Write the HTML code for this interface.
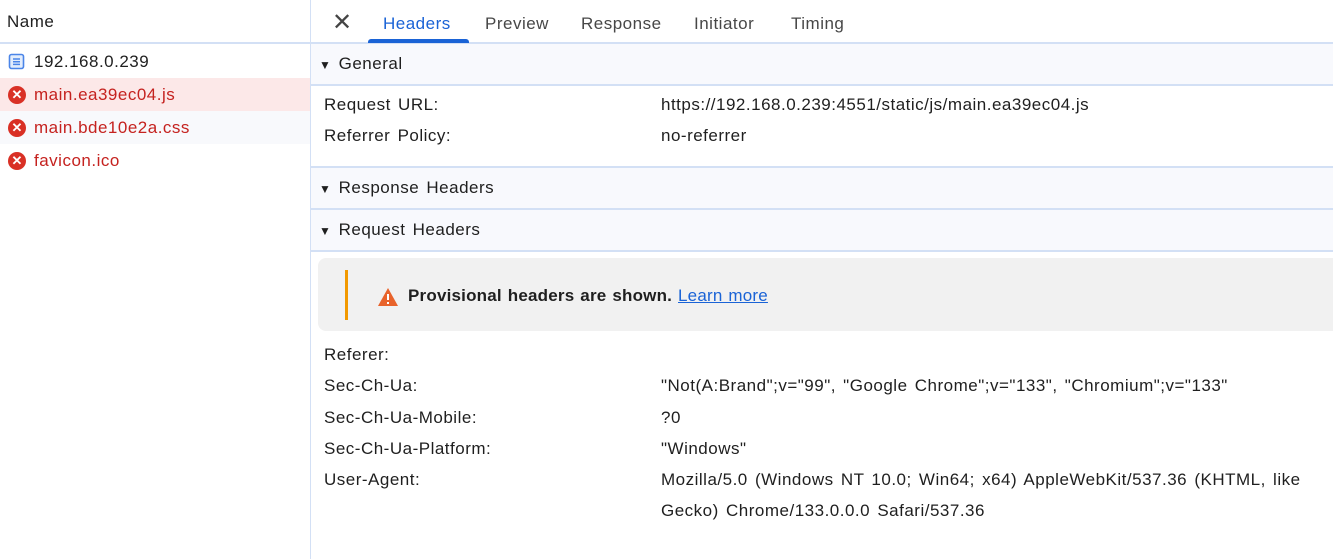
<!DOCTYPE html><html><head><style>
body{margin:0;width:1333px;height:559px;overflow:hidden;background:#fff;font-family:"Liberation Sans",sans-serif;font-size:17px;color:#1f1f1f;position:relative;letter-spacing:0.5px;word-spacing:2px}
.a{position:absolute;white-space:nowrap}
.l{position:absolute;left:0;top:0;width:310px;height:559px;border-right:1px solid #d3e0f5}
.row{position:absolute;left:0;width:310px;height:33px;line-height:33px}
.row span{position:absolute;left:34px}
.err{color:#c5221f}
.ic{position:absolute;left:8px;top:8px;width:18px;height:18px;border-radius:50%;background:#d93025;color:#fff;font-size:13px;line-height:18px;text-align:center;font-weight:bold;letter-spacing:0}
.sec{position:absolute;left:311px;right:0;height:40px;line-height:40px;background:#f8f9fd;border-bottom:2px solid #d3e0f5;padding-left:8px}
.tab{position:absolute;top:0;line-height:48px;color:#474747}
</style></head><body>
<div class="l">
<div class="a" style="left:7px;top:12px">Name</div>
<div style="position:absolute;left:0;top:42px;width:310px;height:2px;background:#d3e0f5"></div>
<div class="row" style="top:45px"><svg style="position:absolute;left:8px;top:8px" width="17" height="17" viewBox="0 0 17 17"><rect x="1.5" y="1.5" width="14" height="14" rx="2" fill="#e3edfc" stroke="#4b85e8" stroke-width="1.6"/><path d="M5 6h7M5 8.7h7M5 11.4h7" stroke="#4b85e8" stroke-width="1.5"/></svg><span>192.168.0.239</span></div>
<div class="row err" style="top:78px;background:#fce8e8"><div class="ic">✕</div><span>main.ea39ec04.js</span></div>
<div class="row err" style="top:111px;background:#f8f9fc"><div class="ic">✕</div><span>main.bde10e2a.css</span></div>
<div class="row err" style="top:144px"><div class="ic">✕</div><span>favicon.ico</span></div>
</div>
<div style="position:absolute;left:311px;right:0;top:42px;height:2px;background:#d3e0f5"></div>
<div class="a" style="left:332px;top:8px;font-size:24px;color:#444">✕</div>
<div class="tab" style="left:383px;color:#1a63d6">Headers</div>
<div style="position:absolute;left:368px;top:39px;width:101px;height:4px;background:#1a63d6;border-radius:3px 3px 0 0"></div>
<div class="tab" style="left:485px">Preview</div>
<div class="tab" style="left:581px">Response</div>
<div class="tab" style="left:694px">Initiator</div>
<div class="tab" style="left:791px">Timing</div>
<div class="sec" style="top:44px"><span style="font-size:12px">▼</span> General</div>
<div class="a" style="left:324px;top:95px">Request URL:</div><div class="a" style="left:661px;top:95px">https://192.168.0.239:4551/static/js/main.ea39ec04.js</div>
<div class="a" style="left:324px;top:126px">Referrer Policy:</div><div class="a" style="left:661px;top:126px">no-referrer</div>
<div style="position:absolute;left:311px;right:0;top:166px;height:2px;background:#d3e0f5"></div>
<div class="sec" style="top:168px"><span style="font-size:12px">▼</span> Response Headers</div>
<div class="sec" style="top:210px"><span style="font-size:12px">▼</span> Request Headers</div>
<div style="position:absolute;left:318px;right:0;top:258px;height:73px;background:#f1f1f1;border-radius:8px 0 0 8px"></div>
<div style="position:absolute;left:345px;top:270px;width:3px;height:50px;background:#f29900"></div>
<svg class="a" style="left:377px;top:287px" width="22" height="20" viewBox="0 0 22 20"><path d="M11 1L21 19H1Z" fill="#e8632b"/><path d="M11 7v6M11 15v2" stroke="#fff" stroke-width="2"/></svg>
<div class="a" style="left:408px;top:286px;font-weight:bold;letter-spacing:0.2px;word-spacing:1px">Provisional headers are shown. <span style="font-weight:normal;color:#1a63d6;text-decoration:underline">Learn more</span></div>
<div class="a" style="left:324px;top:345px">Referer:</div>
<div class="a" style="left:324px;top:376px">Sec-Ch-Ua:</div><div class="a" style="left:661px;top:376px">"Not(A:Brand";v="99", "Google Chrome";v="133", "Chromium";v="133"</div>
<div class="a" style="left:324px;top:408px">Sec-Ch-Ua-Mobile:</div><div class="a" style="left:661px;top:408px">?0</div>
<div class="a" style="left:324px;top:439px">Sec-Ch-Ua-Platform:</div><div class="a" style="left:661px;top:439px">"Windows"</div>
<div class="a" style="left:324px;top:470px">User-Agent:</div><div class="a" style="left:661px;top:470px">Mozilla/5.0 (Windows NT 10.0; Win64; x64) AppleWebKit/537.36 (KHTML, like</div>
<div class="a" style="left:661px;top:501px">Gecko) Chrome/133.0.0.0 Safari/537.36</div>
</body></html>
